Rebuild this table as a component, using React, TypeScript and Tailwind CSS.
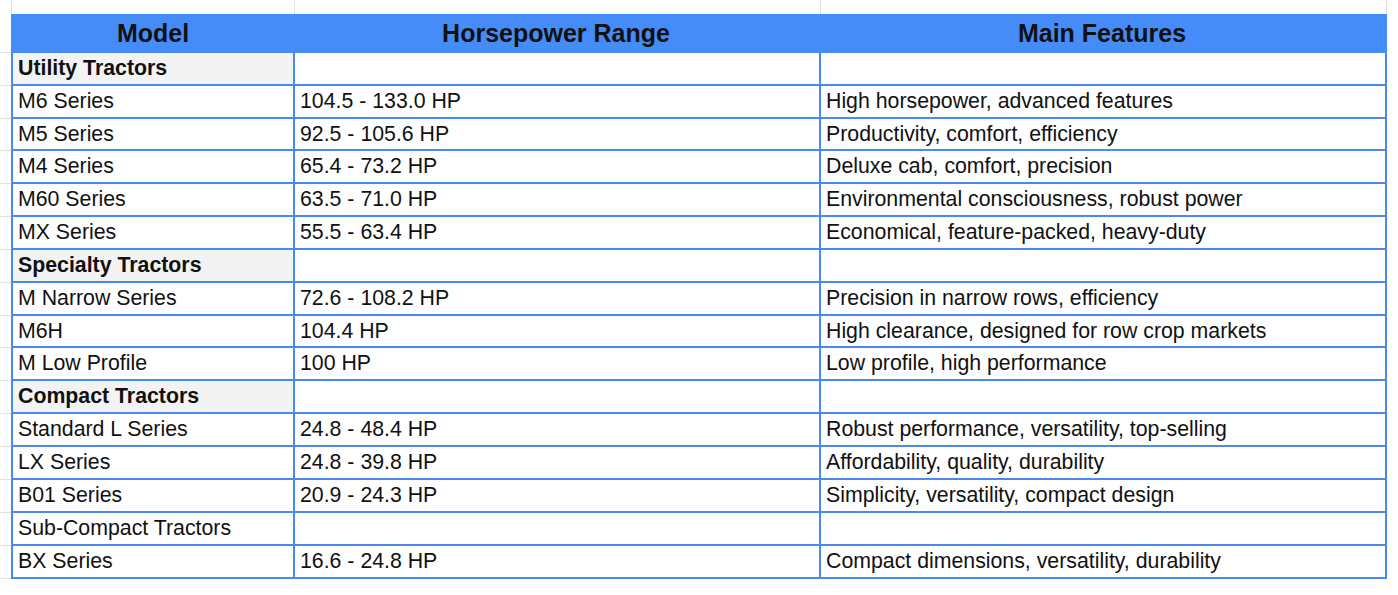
import React from 'react';

type Row = { model: string; hp: string; features: string; category?: boolean; bold?: boolean; h: string };

const rows: Row[] = [
  { model: 'Utility Tractors', hp: '', features: '', category: true, bold: true, h: 'h-[33px]' },
  { model: 'M6 Series', hp: '104.5 - 133.0 HP', features: 'High horsepower, advanced features', h: 'h-[33px]' },
  { model: 'M5 Series', hp: '92.5 - 105.6 HP', features: 'Productivity, comfort, efficiency', h: 'h-[32px]' },
  { model: 'M4 Series', hp: '65.4 - 73.2 HP', features: 'Deluxe cab, comfort, precision', h: 'h-[33px]' },
  { model: 'M60 Series', hp: '63.5 - 71.0 HP', features: 'Environmental consciousness, robust power', h: 'h-[33px]' },
  { model: 'MX Series', hp: '55.5 - 63.4 HP', features: 'Economical, feature-packed, heavy-duty', h: 'h-[33px]' },
  { model: 'Specialty Tractors', hp: '', features: '', category: true, bold: true, h: 'h-[33px]' },
  { model: 'M Narrow Series', hp: '72.6 - 108.2 HP', features: 'Precision in narrow rows, efficiency', h: 'h-[33px]' },
  { model: 'M6H', hp: '104.4 HP', features: 'High clearance, designed for row crop markets', h: 'h-[32px]' },
  { model: 'M Low Profile', hp: '100 HP', features: 'Low profile, high performance', h: 'h-[33px]' },
  { model: 'Compact Tractors', hp: '', features: '', category: true, bold: true, h: 'h-[33px]' },
  { model: 'Standard L Series', hp: '24.8 - 48.4 HP', features: 'Robust performance, versatility, top-selling', h: 'h-[33px]' },
  { model: 'LX Series', hp: '24.8 - 39.8 HP', features: 'Affordability, quality, durability', h: 'h-[33px]' },
  { model: 'B01 Series', hp: '20.9 - 24.3 HP', features: 'Simplicity, versatility, compact design', h: 'h-[33px]' },
  { model: 'Sub-Compact Tractors', hp: '', features: '', h: 'h-[33px]' },
  { model: 'BX Series', hp: '16.6 - 24.8 HP', features: 'Compact dimensions, versatility, durability', h: 'h-[33px]' },
];

const cell = 'flex items-center px-[5px] pt-px border-b-2 border-r-2 border-[#4a8af0] whitespace-nowrap overflow-hidden';

export default function App() {
  return (
    <div
      className="w-[1398px] h-[595px] bg-white text-[#111] overflow-hidden"
      style={{ fontFamily: '"Liberation Sans", Arial, sans-serif' }}
    >
      {/* sheet grid above the table */}
      <div className="flex h-[14px]">
        <div className="w-[12px] border-r border-[#e2e2e2]" />
        <div className="w-[283px] border-r border-[#e2e2e2]" />
        <div className="w-[526px] border-r border-[#e2e2e2]" />
        <div className="w-[566px] border-r border-[#e2e2e2]" />
      </div>

      {/* header */}
      <div className="flex h-[39px]">
        <div className="w-[11px] border-b border-[#e2e2e2]" />
        <div className="flex w-[1376px] bg-[#458cf8] border-2 border-[#458cf8] text-[25px] font-bold">
          <div className="w-[280px] flex items-center justify-center">Model</div>
          <div className="w-[526px] flex items-center justify-center">Horsepower Range</div>
          <div className="w-[566px] flex items-center justify-center">Main Features</div>
        </div>
      </div>

      {/* body */}
      {rows.map((r) => (
        <div key={r.model} className={`flex ${r.h}`}>
          <div className="w-[11px] border-b border-[#e2e2e2]" />
          <div
            className={`${cell} w-[284px] border-l-2 text-[21.3px] ${r.category ? 'bg-[#f3f3f3]' : ''} ${r.bold ? 'font-bold' : ''}`}
          >
            {r.model}
          </div>
          <div className={`${cell} w-[526px] text-[21.3px]`}>{r.hp}</div>
          <div className={`${cell} w-[566px] text-[21.3px]`}>{r.features}</div>
        </div>
      ))}
    </div>
  );
}
